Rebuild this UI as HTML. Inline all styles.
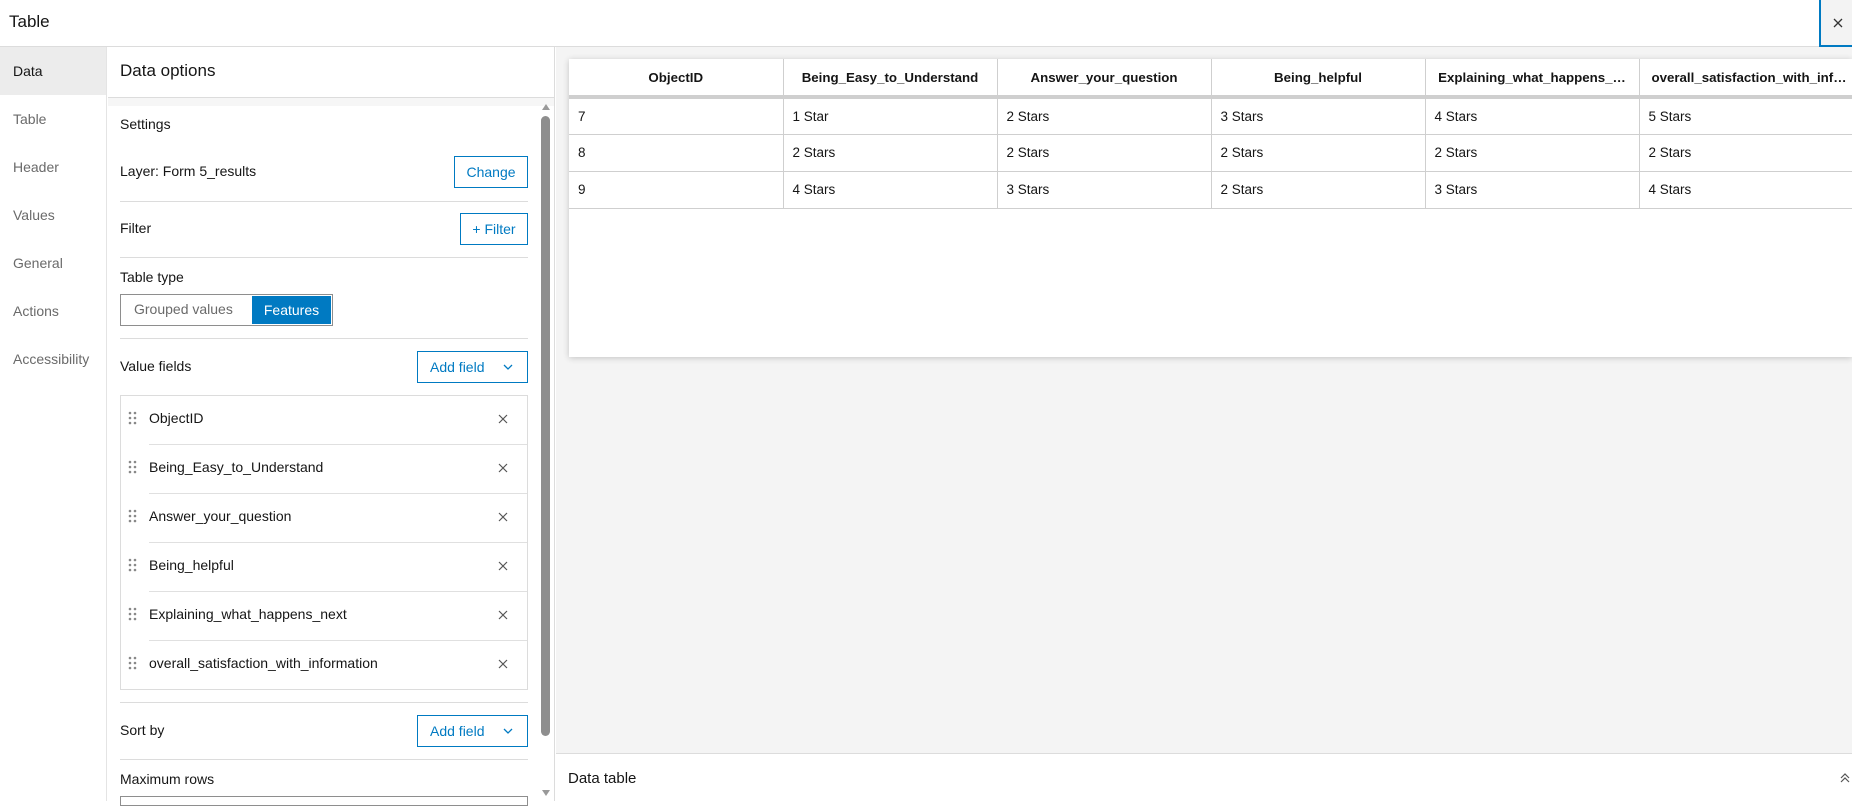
<!DOCTYPE html>
<html><head><meta charset="utf-8"><style>
*{box-sizing:border-box;margin:0;padding:0}
body{width:1852px;height:801px;overflow:hidden;font-family:"Liberation Sans",sans-serif;color:#151515;background:#fff;position:relative;font-size:14px}
.abs{position:absolute}
.hdr{left:0;top:0;width:1852px;height:47px;border-bottom:1px solid #dcdcdc;background:#fff}
.nav{left:0;top:47px;width:107px;height:754px;background:#fff;border-right:1px solid #e4e4e4}
.nav div{height:48px;line-height:48px;padding-left:13px;color:#6a6a6a;font-size:14px}
.nav div.sel{background:#ececec;color:#151515}
.mid{left:107px;top:47px;width:448px;height:754px;background:#fff;border-right:1px solid #dcdcdc}
.lbl{left:120px;font-size:14px}
.btn{border:1px solid #007ac2;color:#007ac2;text-align:center;font-size:14px;background:#fff}
.div{left:120px;width:408px;height:1px;background:#dcdcdc}
.row{position:absolute;left:0;width:406px;height:49px}
.row .t{position:absolute;left:28px;top:14px}
.row .x{position:absolute;right:19px;top:18px;width:10px;height:10px}
.row .g{position:absolute;left:7px;top:15px;width:9px;height:15px}
.row .ln{position:absolute;left:28px;right:0;bottom:0;height:1px;background:#e0e0e0}
table{border-collapse:collapse;table-layout:fixed}
td,th{border:1px solid #cfcfcf;height:37px;font-size:13.5px;padding-left:9px;text-align:left;font-weight:normal;white-space:nowrap;overflow:hidden}
th{font-weight:bold;font-size:13.3px;text-align:center;height:38px;padding:0 6px;border-bottom:4px solid #cfcfcf;border-top:none}
.chev{position:absolute;right:14px;top:12px;width:10px;height:7px}
</style></head><body>
<div class="abs hdr"><div class="abs" style="left:9px;top:12px;font-size:17px">Table</div>
<div class="abs" style="left:1819px;top:0;width:33px;height:47px;border-left:2px solid #007ac2;border-bottom:2px solid #007ac2;background:#f3f3f3"><svg class="abs" style="left:12px;top:18px" width="10" height="10"><path d="M1 1L9 9M9 1L1 9" stroke="#333" stroke-width="1.3"/></svg></div></div>
<div class="abs nav"><div class="sel">Data</div><div>Table</div><div>Header</div><div>Values</div><div>General</div><div>Actions</div><div>Accessibility</div></div>
<div class="abs mid"></div>
<div class="abs" style="left:108px;top:97px;width:446px;height:9px;background:#f6f6f6;border-top:1px solid #dcdcdc"></div>
<div class="abs" style="left:120px;top:61px;font-size:17px">Data options</div>
<div class="abs" style="left:541px;top:106px;width:10px;height:695px;background:#fff"></div>
<div class="abs" style="left:542px;top:104px;border-left:4px solid transparent;border-right:4px solid transparent;border-bottom:6px solid #999"></div>
<div class="abs" style="left:541px;top:116px;width:9px;height:620px;background:#8e8e8e;border-radius:5px"></div>
<div class="abs" style="left:542px;top:790px;border-left:4px solid transparent;border-right:4px solid transparent;border-top:6px solid #999"></div>
<div class="abs lbl" style="top:116px">Settings</div>
<div class="abs lbl" style="top:163px">Layer: Form 5_results</div>
<div class="abs btn" style="left:454px;top:156px;width:74px;height:32px;line-height:30px">Change</div>
<div class="abs div" style="top:201px"></div>
<div class="abs lbl" style="top:220px">Filter</div>
<div class="abs btn" style="left:460px;top:213px;width:68px;height:32px;line-height:30px">+ Filter</div>
<div class="abs div" style="top:257px"></div>
<div class="abs lbl" style="top:269px">Table type</div>
<div class="abs" style="left:120px;top:294px;width:213px;height:32px;border:1px solid #8e8e8e;background:#fff">
<div class="abs" style="left:13px;top:6px;color:#6a6a6a">Grouped values</div>
<div class="abs" style="left:131px;top:1px;width:79px;height:28px;background:#007ac2;color:#fff;text-align:center;line-height:28px">Features</div></div>
<div class="abs div" style="top:338px"></div>
<div class="abs lbl" style="top:358px">Value fields</div>
<div class="abs btn" style="left:417px;top:351px;width:111px;height:32px;line-height:30px;text-align:left;padding-left:12px">Add field <svg class="chev"><path d="M1 1L5 5L9 1" fill="none" stroke="#007ac2" stroke-width="1.3"/></svg></div>
<div class="abs" style="left:120px;top:395px;width:408px;height:295px;border:1px solid #dcdcdc">
<div class="row" style="top:0"><svg class="g"><g fill="#888"><circle cx="2" cy="2" r="1.3"/><circle cx="7" cy="2" r="1.3"/><circle cx="2" cy="7" r="1.3"/><circle cx="7" cy="7" r="1.3"/><circle cx="2" cy="12" r="1.3"/><circle cx="7" cy="12" r="1.3"/></g></svg><span class="t">ObjectID</span><svg class="x"><path d="M1 1L9 9M9 1L1 9" stroke="#555" stroke-width="1.2"/></svg><div class="ln"></div></div>
<div class="row" style="top:49px"><svg class="g"><g fill="#888"><circle cx="2" cy="2" r="1.3"/><circle cx="7" cy="2" r="1.3"/><circle cx="2" cy="7" r="1.3"/><circle cx="7" cy="7" r="1.3"/><circle cx="2" cy="12" r="1.3"/><circle cx="7" cy="12" r="1.3"/></g></svg><span class="t">Being_Easy_to_Understand</span><svg class="x"><path d="M1 1L9 9M9 1L1 9" stroke="#555" stroke-width="1.2"/></svg><div class="ln"></div></div>
<div class="row" style="top:98px"><svg class="g"><g fill="#888"><circle cx="2" cy="2" r="1.3"/><circle cx="7" cy="2" r="1.3"/><circle cx="2" cy="7" r="1.3"/><circle cx="7" cy="7" r="1.3"/><circle cx="2" cy="12" r="1.3"/><circle cx="7" cy="12" r="1.3"/></g></svg><span class="t">Answer_your_question</span><svg class="x"><path d="M1 1L9 9M9 1L1 9" stroke="#555" stroke-width="1.2"/></svg><div class="ln"></div></div>
<div class="row" style="top:147px"><svg class="g"><g fill="#888"><circle cx="2" cy="2" r="1.3"/><circle cx="7" cy="2" r="1.3"/><circle cx="2" cy="7" r="1.3"/><circle cx="7" cy="7" r="1.3"/><circle cx="2" cy="12" r="1.3"/><circle cx="7" cy="12" r="1.3"/></g></svg><span class="t">Being_helpful</span><svg class="x"><path d="M1 1L9 9M9 1L1 9" stroke="#555" stroke-width="1.2"/></svg><div class="ln"></div></div>
<div class="row" style="top:196px"><svg class="g"><g fill="#888"><circle cx="2" cy="2" r="1.3"/><circle cx="7" cy="2" r="1.3"/><circle cx="2" cy="7" r="1.3"/><circle cx="7" cy="7" r="1.3"/><circle cx="2" cy="12" r="1.3"/><circle cx="7" cy="12" r="1.3"/></g></svg><span class="t">Explaining_what_happens_next</span><svg class="x"><path d="M1 1L9 9M9 1L1 9" stroke="#555" stroke-width="1.2"/></svg><div class="ln"></div></div>
<div class="row" style="top:245px"><svg class="g"><g fill="#888"><circle cx="2" cy="2" r="1.3"/><circle cx="7" cy="2" r="1.3"/><circle cx="2" cy="7" r="1.3"/><circle cx="7" cy="7" r="1.3"/><circle cx="2" cy="12" r="1.3"/><circle cx="7" cy="12" r="1.3"/></g></svg><span class="t">overall_satisfaction_with_information</span><svg class="x"><path d="M1 1L9 9M9 1L1 9" stroke="#555" stroke-width="1.2"/></svg></div>
</div>
<div class="abs div" style="top:702px"></div>
<div class="abs lbl" style="top:722px">Sort by</div>
<div class="abs btn" style="left:417px;top:715px;width:111px;height:32px;line-height:30px;text-align:left;padding-left:12px">Add field <svg class="chev"><path d="M1 1L5 5L9 1" fill="none" stroke="#007ac2" stroke-width="1.3"/></svg></div>
<div class="abs div" style="top:759px"></div>
<div class="abs lbl" style="top:771px">Maximum rows</div>
<div class="abs" style="left:120px;top:796px;width:408px;height:10px;border:1px solid #8e8e8e"></div>
<div class="abs" style="left:556px;top:47px;width:1296px;height:706px;background:#f4f4f4"></div>
<div class="abs" style="left:569px;top:59px;width:1283px;height:298px;background:#fff;box-shadow:0 1px 6px rgba(0,0,0,.2);overflow:hidden">
<table style="width:1290px"><colgroup><col style="width:214px"><col style="width:214px"><col style="width:214px"><col style="width:214px"><col style="width:214px"><col style="width:220px"></colgroup>
<tr><th style="border-left:none">ObjectID</th><th>Being_Easy_to_Understand</th><th>Answer_your_question</th><th>Being_helpful</th><th>Explaining_what_happens_…</th><th>overall_satisfaction_with_inf…</th></tr>
<tr><td style="border-left:none">7</td><td>1 Star</td><td>2 Stars</td><td>3 Stars</td><td>4 Stars</td><td>5 Stars</td></tr>
<tr><td style="border-left:none">8</td><td>2 Stars</td><td>2 Stars</td><td>2 Stars</td><td>2 Stars</td><td>2 Stars</td></tr>
<tr><td style="border-left:none">9</td><td>4 Stars</td><td>3 Stars</td><td>2 Stars</td><td>3 Stars</td><td>4 Stars</td></tr>
</table></div>
<div class="abs" style="left:556px;top:753px;width:1296px;height:48px;background:#fff;border-top:1px solid #dcdcdc">
<div class="abs" style="left:12px;top:16px;font-size:15px">Data table</div>
<svg class="abs" style="left:1284px;top:19px" width="10" height="10"><path d="M1 5L5 1L9 5M1 9L5 5L9 9" fill="none" stroke="#555" stroke-width="1.2"/></svg></div>
</body></html>
